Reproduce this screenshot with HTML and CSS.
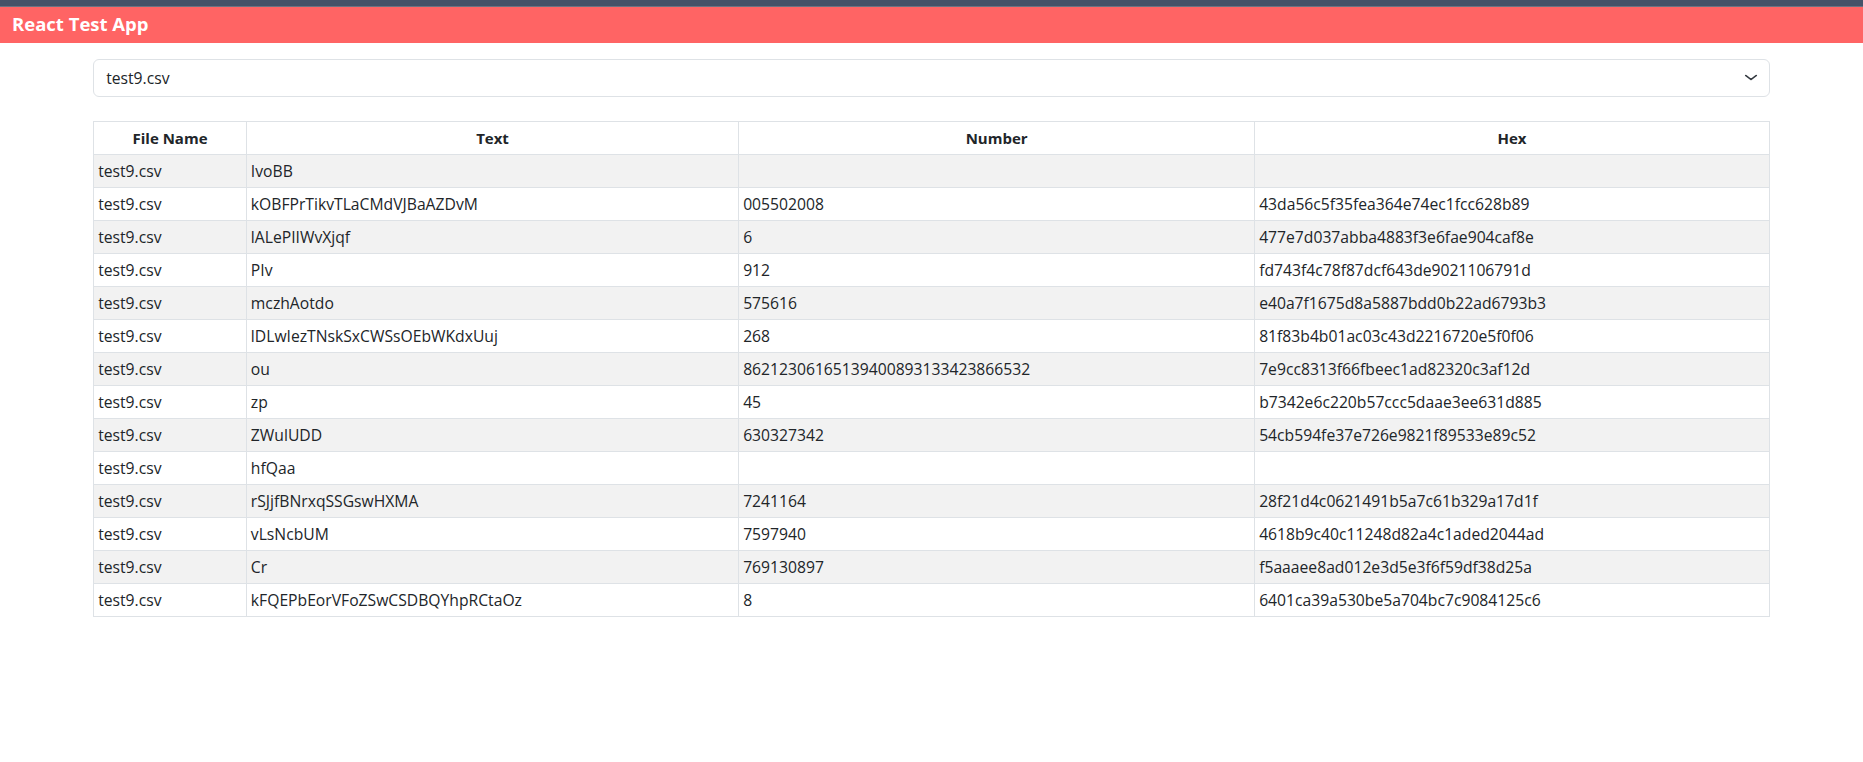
FILE: index.html
```html
<!DOCTYPE html>
<html lang="en">
<head>
<meta charset="utf-8">
<title>React Test App</title>
<link rel="stylesheet" href="styles.css">
</head>
<body>
<div class="topbar"></div>
<header class="app-header">React Test App</header>
<main class="container">
  <div class="select-wrap">
    <select class="form-select">
      <option>test9.csv</option>
    </select>
    <svg class="chevron" viewBox="0 0 16 16" width="16" height="12" preserveAspectRatio="none"><path d="m2 5 6 6 6-6" fill="none" stroke="#343a40" stroke-width="2" stroke-linecap="round" stroke-linejoin="round"/></svg>
  </div>
  <table class="data-table">
    <colgroup>
      <col class="c-file"><col class="c-text"><col class="c-num"><col class="c-hex">
    </colgroup>
    <thead>
      <tr><th>File Name</th><th>Text</th><th>Number</th><th>Hex</th></tr>
    </thead>
    <tbody>
      <tr><td>test9.csv</td><td>IvoBB</td><td></td><td></td></tr>
      <tr><td>test9.csv</td><td>kOBFPrTikvTLaCMdVJBaAZDvM</td><td>005502008</td><td>43da56c5f35fea364e74ec1fcc628b89</td></tr>
      <tr><td>test9.csv</td><td>lALePIIWvXjqf</td><td>6</td><td>477e7d037abba4883f3e6fae904caf8e</td></tr>
      <tr><td>test9.csv</td><td>PIv</td><td>912</td><td>fd743f4c78f87dcf643de9021106791d</td></tr>
      <tr><td>test9.csv</td><td>mczhAotdo</td><td>575616</td><td>e40a7f1675d8a5887bdd0b22ad6793b3</td></tr>
      <tr><td>test9.csv</td><td>lDLwIezTNskSxCWSsOEbWKdxUuj</td><td>268</td><td>81f83b4b01ac03c43d2216720e5f0f06</td></tr>
      <tr><td>test9.csv</td><td>ou</td><td>86212306165139400893133423866532</td><td>7e9cc8313f66fbeec1ad82320c3af12d</td></tr>
      <tr><td>test9.csv</td><td>zp</td><td>45</td><td>b7342e6c220b57ccc5daae3ee631d885</td></tr>
      <tr><td>test9.csv</td><td>ZWulUDD</td><td>630327342</td><td>54cb594fe37e726e9821f89533e89c52</td></tr>
      <tr><td>test9.csv</td><td>hfQaa</td><td></td><td></td></tr>
      <tr><td>test9.csv</td><td>rSJjfBNrxqSSGswHXMA</td><td>7241164</td><td>28f21d4c0621491b5a7c61b329a17d1f</td></tr>
      <tr><td>test9.csv</td><td>vLsNcbUM</td><td>7597940</td><td>4618b9c40c11248d82a4c1aded2044ad</td></tr>
      <tr><td>test9.csv</td><td>Cr</td><td>769130897</td><td>f5aaaee8ad012e3d5e3f6f59df38d25a</td></tr>
      <tr><td>test9.csv</td><td>kFQEPbEorVFoZSwCSDBQYhpRCtaOz</td><td>8</td><td>6401ca39a530be5a704bc7c9084125c6</td></tr>
    </tbody>
  </table>
</main>
</body>
</html>
```

FILE: styles.css
```css
* { box-sizing: border-box; }
html, body {
  margin: 0;
  padding: 0;
  background: #ffffff;
  color: #212529;
  font-family: "Open Sans", "Noto Sans", "Liberation Sans", sans-serif;
  font-size: 16px;
}
.topbar {
  height: 7px;
  background: #455268;
  border-bottom: 1px solid #6b7383;
}
.app-header {
  height: 36px;
  background: #ff6464;
  color: #ffffff;
  font-weight: 700;
  font-size: 18.5px;
  line-height: 34px;
  padding-left: 12px;
}
.container {
  width: 90%;
  margin: 16px auto 0;
}
.select-wrap {
  position: relative;
  margin-bottom: 24px;
}
.form-select {
  display: block;
  width: 100%;
  height: 38px;
  padding: 6px 36px 6px 12px;
  font-family: inherit;
  font-size: 15.7px;
  line-height: 24px;
  color: #212529;
  background: #ffffff;
  border: 1px solid #dee2e6;
  border-radius: 6px;
  appearance: none;
  -webkit-appearance: none;
}
.chevron {
  position: absolute;
  right: 12px;
  top: 13px;
  width: 14px;
  height: 11px;
  pointer-events: none;
}
.data-table {
  width: 100%;
  border-collapse: collapse;
  table-layout: fixed;
}
.c-file { width: 152.7px; }
.c-text { width: 492.3px; }
.c-num { width: 516px; }
.data-table th,
.data-table td {
  border: 1px solid #dee2e6;
  padding: 4px 4px;
  height: 33px;
  line-height: 24px;
  font-size: 15.7px;
  white-space: nowrap;
  overflow: hidden;
}
.data-table th {
  font-weight: 700;
  font-size: 15px;
  text-align: center;
}
.data-table td {
  text-align: left;
}
.data-table tbody tr:nth-child(odd) td {
  background: #f2f2f2;
}
```
